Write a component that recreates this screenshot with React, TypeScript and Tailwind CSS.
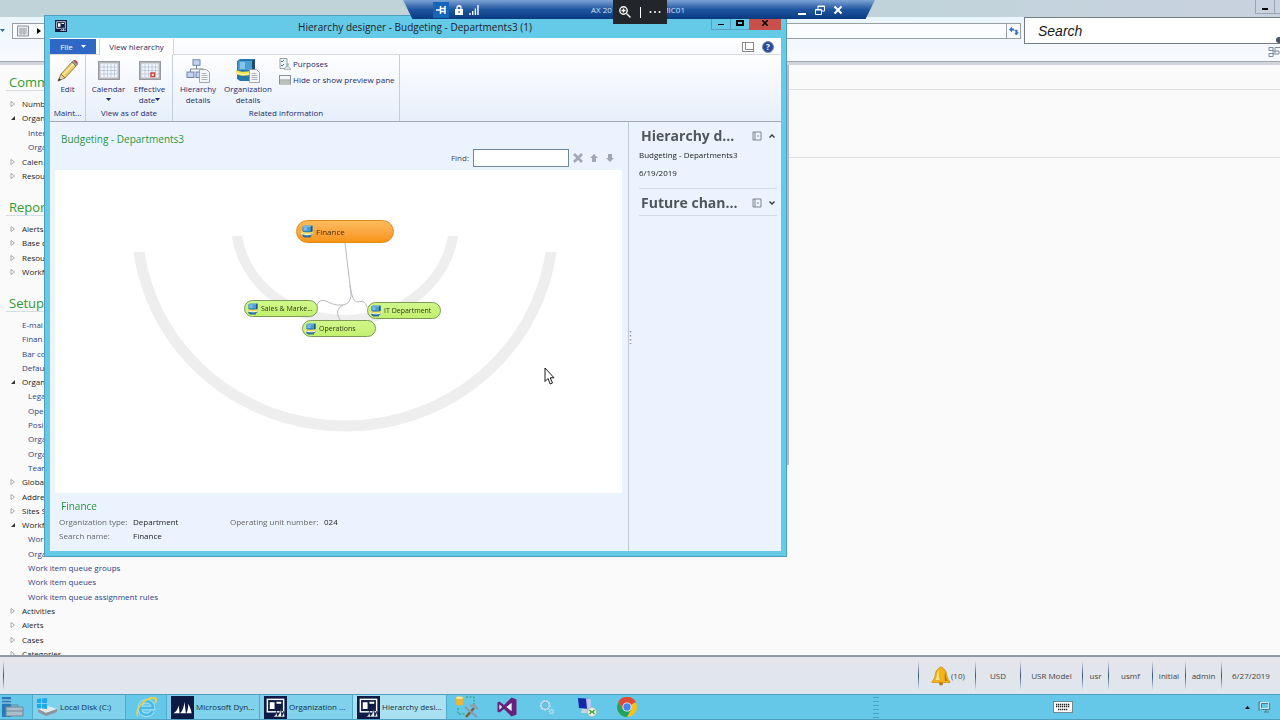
import React from 'react';

interface NavItem {
  label: string;
  kind: 'closed' | 'open' | 'link' | 'child';
}

interface NavSection {
  title: string;
  listClass: string;
  items: NavItem[];
}

const navSections: NavSection[] = [
  {
    title: 'Comm',
    listClass: 'h-[86px]',
    items: [
      { label: 'Numb', kind: 'closed' },
      { label: 'Organ', kind: 'open' },
      { label: 'Inter', kind: 'child' },
      { label: 'Orga', kind: 'child' },
      { label: 'Calen', kind: 'closed' },
      { label: 'Resou', kind: 'closed' },
    ],
  },
  {
    title: 'Repor',
    listClass: 'h-[57px]',
    items: [
      { label: 'Alerts', kind: 'closed' },
      { label: 'Base d', kind: 'closed' },
      { label: 'Resou', kind: 'closed' },
      { label: 'Workf', kind: 'closed' },
    ],
  },
  {
    title: 'Setup',
    listClass: 'h-[343px]',
    items: [
      { label: 'E-mai', kind: 'link' },
      { label: 'Finan', kind: 'link' },
      { label: 'Bar co', kind: 'link' },
      { label: 'Defau', kind: 'link' },
      { label: 'Organ', kind: 'open' },
      { label: 'Lega', kind: 'child' },
      { label: 'Ope', kind: 'child' },
      { label: 'Posi', kind: 'child' },
      { label: 'Orga', kind: 'child' },
      { label: 'Orga', kind: 'child' },
      { label: 'Tean', kind: 'child' },
      { label: 'Globa', kind: 'closed' },
      { label: 'Addre', kind: 'closed' },
      { label: 'Sites S', kind: 'closed' },
      { label: 'Workf', kind: 'open' },
      { label: 'Wor', kind: 'child' },
      { label: 'Orga', kind: 'child' },
      { label: 'Work item queue groups', kind: 'child' },
      { label: 'Work item queues', kind: 'child' },
      { label: 'Work item queue assignment rules', kind: 'child' },
      { label: 'Activities', kind: 'closed' },
      { label: 'Alerts', kind: 'closed' },
      { label: 'Cases', kind: 'closed' },
      { label: 'Categories', kind: 'closed' },
    ],
  },
];

const statusCells = [
  { label: 'USD', width: 'w-[45px]' },
  { label: 'USR Model', width: 'w-[62px]' },
  { label: 'usr', width: 'w-[26px]' },
  { label: 'usmf', width: 'w-[44px]' },
  { label: 'initial', width: 'w-[33px]' },
  { label: 'admin', width: 'w-[36px]' },
  { label: '6/27/2019', width: 'w-[59px]' },
];

/* ---------- icons ---------- */

function OrgIcon({ className }: { className: string }) {
  return (
    <svg viewBox="0 0 24 24" className={className} aria-hidden="true">
      <path d="M3 3l3-2h15v17l-3 2H3z" fill="#2f7fb8" />
      <path d="M3 3h15v8H3z" fill="#4a9bd0" />
      <path d="M6 1h15l-3 2H3z" fill="#8cc6e6" />
      <path d="M5 4h6v6H5z" fill="#7cbbe2" />
      <path d="M18 3l3-2v17l-3 2z" fill="#1f567f" />
      <path d="M0 11c6 3 14 3 22 1v3c-8 3-16 2-22-1z" fill="#f3dc52" />
      <path d="M0 14c6 3 14 3 22 1v2c-8 3-16 2-22-1z" fill="#f8f6dc" />
      <path d="M3 18c4 2 9 2 15 1v4H7l-4-2z" fill="#2a6d9e" />
    </svg>
  );
}

function PageIcon({ x, y }: { x: number; y: number }) {
  return (
    <g transform={`translate(${x} ${y})`}>
      <path d="M0 0h7l3 3v10H0z" fill="#f5f6f8" stroke="#8a929c" strokeWidth=".8" />
      <path d="M2 4h5M2 6h6M2 8h6M2 10h6" stroke="#9aa2ac" strokeWidth=".8" />
    </g>
  );
}

function PencilIcon() {
  return (
    <svg viewBox="0 0 24 24" className="h-6 w-6" aria-hidden="true">
      <path d="M2 22l3-7 4 4z" fill="#e8cfa0" stroke="#5d5138" strokeWidth=".7" />
      <path d="M2 22l1-3 2 2z" fill="#333" />
      <path d="M5 15L16 3l4 4L9 19z" fill="#f0cc66" stroke="#80672b" strokeWidth=".8" />
      <path d="M7 16L18 4.500" stroke="#fff0b0" strokeWidth="1.200" />
      <path d="M16 3l1.500-1.500 4 4L20 7z" fill="#8fa5a8" stroke="#566" strokeWidth=".6" />
      <path d="M17.500 1.500C19-.5 23 3 21.500 5.500z" fill="#c9453b" />
    </svg>
  );
}

function CalendarIcon({ marked }: { marked?: boolean }) {
  return (
    <svg viewBox="0 0 24 24" className="h-6 w-6" aria-hidden="true">
      <rect x="1.500" y="2.500" width="21" height="18" fill="#b4b8bc" stroke="#96999d" />
      <rect x="3.500" y="4.500" width="17" height="14" fill="#f2f6fb" />
      <path d="M4 8h16M4 11.500h16M4 15h16M7 5v13M10.500 5v13M14 5v13M17.500 5v13" stroke="#b4c4dc" strokeWidth=".8" />
      {marked && <rect x="13" y="14" width="3.500" height="3.500" fill="#fff" stroke="#d8403c" strokeWidth="1.500" />}
    </svg>
  );
}

function HierarchyIcon() {
  return (
    <svg viewBox="0 0 24 24" className="h-6 w-6" aria-hidden="true">
      <path d="M10.500 6v4M4.500 14v-4h13v4" fill="none" stroke="#7d8794" />
      <rect x="7" y=".8" width="7" height="5.500" fill="#c3d3ef" stroke="#6f84ad" />
      <rect x="1" y="13" width="7" height="5.500" fill="#c3d3ef" stroke="#6f84ad" />
      <rect x="10" y="13" width="7" height="5.500" fill="#c3d3ef" stroke="#6f84ad" />
      <PageIcon x={13.5} y={10.5} />
    </svg>
  );
}

function OrgDetailsIcon() {
  return (
    <svg viewBox="0 0 24 24" className="h-6 w-6" aria-hidden="true">
      <path d="M1 2l3-2h15v19l-3 3H4l-3-2z" fill="#2777a8" />
      <path d="M2 2h14v9H2z" fill="#4aa0d2" />
      <path d="M4 3h5v7H4z" fill="#86c5e8" />
      <path d="M16 2l3-2v19l-3 3z" fill="#1c4d70" />
      <path d="M0 11c6 3 13 2 20-1v4c-7 3-14 4-20 1z" fill="#f4de45" />
      <path d="M0 13c6 3 13 2 20-1v1c-7 3-14 4-20 1z" fill="#fbf8d0" />
      <PageIcon x={13.5} y={10.5} />
    </svg>
  );
}

function PurposesIcon() {
  return (
    <svg viewBox="0 0 12 12" className="h-3 w-3" aria-hidden="true">
      <path d="M1 .5h7v10H1z" fill="#eef4f6" stroke="#7f8c96" strokeWidth=".8" />
      <path d="M2 3l1 1 2-2M2 7l1 1 2-2" fill="none" stroke="#3c7f9a" />
      <circle cx="8.500" cy="6.500" r="1.500" fill="#aab3bd" />
      <path d="M5.500 11.500c0-4 6-4 6 0z" fill="#dfe5ea" stroke="#8a939c" strokeWidth=".6" />
    </svg>
  );
}

function PaneIcon() {
  return (
    <svg viewBox="0 0 12 12" className="h-3 w-3" aria-hidden="true">
      <rect x=".5" y="1.500" width="11" height="8.500" fill="#f4f5f6" stroke="#8c9094" />
      <path d="M1 6.500h10v3H1z" fill="#b9c3ba" />
      <path d="M1 6h10" stroke="#8c9094" />
    </svg>
  );
}

function AxAppIcon({ className }: { className: string }) {
  return (
    <svg viewBox="0 0 24 24" className={className} aria-hidden="true">
      <rect width="24" height="24" fill="#0d1b44" />
      <rect x="3.500" y="3.500" width="17" height="13" fill="none" stroke="#fff" strokeWidth="1.500" />
      <path d="M6 6.500h5v7H6zM13 6h5v2h-5z" fill="#fff" />
      <path d="M9.500 22c2-1 3-3 3.500-6l1 5c2-2 3-5 3.500-9l1 9c1-1 1.500-3 2-5l1.500 6z" fill="#fff" stroke="#0d1b44" strokeWidth=".8" />
    </svg>
  );
}

function DynamicsIcon() {
  return (
    <svg viewBox="0 0 24 24" className="h-[23px] w-[23px]" aria-hidden="true">
      <rect width="24" height="24" fill="#0d1b44" />
      <path d="M2.500 18c3-1.500 4.500-4 5.500-8l1 8zM9.500 18c3-3 4-7 4.500-12l1.500 12zM16 18c1.500-3 2-6 2-10 1.500 3 3 6 3.500 10z" fill="#fff" />
    </svg>
  );
}

function ExpandArrow({ kind }: { kind: NavItem['kind'] }) {
  if (kind === 'closed') {
    return (
      <svg viewBox="0 0 6 6" className="h-1.5 w-1.5" aria-hidden="true">
        <path d="M1 .5v5L4.500 3z" fill="#fff" stroke="#999" strokeWidth=".8" />
      </svg>
    );
  }
  if (kind === 'open') {
    return (
      <svg viewBox="0 0 6 6" className="h-1.5 w-1.5" aria-hidden="true">
        <path d="M5 1v4H1z" fill="#333" />
      </svg>
    );
  }
  return null;
}

function CaretDown() {
  return (
    <svg viewBox="0 0 5 3" className="h-[3px] w-[5px]" aria-hidden="true">
      <path d="M0 0h5L2.500 3z" fill="currentColor" />
    </svg>
  );
}

/* ---------- main application window ---------- */

function AddressBar() {
  return (
    <header>
      <div className="flex h-[17px] justify-end bg-linear-to-r from-[#bfd3d9] from-65% to-[#c9d2e0]">
        <button aria-label="Minimize" className="flex h-3.5 w-5 items-center justify-center border border-t-0 border-[#9aa5b4]">
          <span className="mt-1 h-0.5 w-1.5 bg-black" />
        </button>
        <button aria-label="Maximize" className="h-3.5 w-[5px] border-b border-[#9aa5b4]" />
      </div>
      <div className="flex h-11 items-start bg-linear-to-b from-[#eaf6fc] to-[#f9faff]">
        <span className="mt-3 w-3 text-[#2a6fa0]"><CaretDown /></span>
        <div className="mt-1.5 flex h-4 flex-1 items-center justify-between border border-[#9c9ea6] bg-[#fafcff]">
          <span className="flex items-center gap-2 pl-1">
            <svg viewBox="0 0 12 12" className="h-3 w-3" aria-hidden="true">
              <path d="M.5 1h11v10H.5z" fill="#e6e8ec" stroke="#8d929b" />
              <path d="M2 4h8M2 6h8M2 8h8M4 3v7M7 3v7" stroke="#a3a8b2" />
            </svg>
            <svg viewBox="0 0 4 6" className="h-1.5 w-1" aria-hidden="true">
              <path d="M0 0v6l4-3z" />
            </svg>
          </span>
          <button aria-label="Refresh" className="flex h-full w-3.5 items-center justify-center border-l border-[#9c9ea6]">
            <svg viewBox="0 0 10 10" className="h-2.5 w-2.5" fill="#2f72bd" aria-hidden="true">
              <path d="M0 3.500L3 .5V2.500h2v2H3v2zM10 6.500l-3 3-1.500-2.500H6.500V5H5.500V3.800h3V6.500z" />
            </svg>
          </button>
        </div>
        <div className="ml-[3px] w-[256px]">
          <div className="flex h-[27px] items-center border border-r-0 border-[#777b86] bg-white">
            <input
              type="text"
              aria-label="Search"
              placeholder="Search"
              className="w-full bg-transparent pl-[13px] font-['Liberation_Sans',sans-serif] text-sm italic outline-none placeholder:text-[#1a1a1a]"
            />
            <span className="h-1.5 w-1 self-end rounded-l bg-[#4b5563]" />
          </div>
          <div className="flex h-4 items-center justify-end">
            <svg viewBox="0 0 12 12" className="h-3 w-3" fill="none" stroke="#7f8a9c" aria-hidden="true">
              <path d="M1 1.500h4v3H1zM1 7.500h4v3H1zM7 1.500h5M7 1.500v6M5 5h6v3H5z" />
            </svg>
          </div>
        </div>
      </div>
      <div className="h-1 border-t border-[#a2a5b3] bg-[#d3d5dc]" />
    </header>
  );
}

function NavPane() {
  return (
    <nav className="flex w-[787px] shrink-0 flex-col gap-2.5 pl-1.5 pt-[3px]">
      {navSections.map((section) => (
        <section key={section.title}>
          <h2 className="h-[23px] w-[200px] border-b border-[#d5dde2] pl-[3px] text-[13px] leading-[28px] text-[#2f9a33]">{section.title}</h2>
          <ul className={`mt-1.5 flex flex-col justify-between ${section.listClass}`}>
            {section.items.map((item, i) => (
              <li key={i} className="flex h-3.5 items-center">
                <span className={item.kind === 'child' ? 'w-[22px]' : 'w-4 pl-1'}>
                  <ExpandArrow kind={item.kind} />
                </span>
                <a
                  href="#"
                  className={item.kind === 'child' || item.kind === 'link' ? 'whitespace-nowrap text-[#2b4388]' : 'whitespace-nowrap text-[#222]'}
                >
                  {item.label}
                </a>
              </li>
            ))}
          </ul>
        </section>
      ))}
    </nav>
  );
}

function StatusBar() {
  return (
    <footer className="flex h-[39px] shrink-0 items-stretch justify-between border-t-2 border-[#8e9aa6] bg-linear-to-b from-[#e4e5eb] to-[#dfe6ee] text-[#444]">
      <span className="my-1 ml-[3px] w-px bg-linear-to-b from-transparent via-[#37557f] to-transparent" />
      <div className="flex">
        <div className="flex w-[57px]">
          <span className="my-1 w-px bg-linear-to-b from-transparent via-[#37557f] to-transparent" />
          <span className="flex flex-1 items-center pl-3">
            <svg viewBox="0 0 20 20" className="h-5 w-5" aria-hidden="true">
              <circle cx="10" cy="17.500" r="2" fill="#b8790f" />
              <path d="M10 1c2 0 2 1.500 2 1.500 4 1.500 3.500 7 4.500 9.500.8 2 2.500 2.500 2.500 4.500H1c0-2 1.700-2.500 2.500-4.500C4.500 9.500 4 4 8 2.500 8 2.500 8 1 10 1z" fill="#f2b21c" stroke="#c98a10" strokeWidth=".7" />
              <path d="M8 4c-2.500 2-1.500 7-3.500 10h4C7 10 7.500 6 8 4z" fill="#ffea8a" />
              <path d="M14 5c1 3 .5 7 3 10h-3c-1-3 0-7 0-10z" fill="#c07d14" />
            </svg>
            (10)
          </span>
        </div>
        {statusCells.map((cell) => (
          <div key={cell.label} className={`flex ${cell.width}`}>
            <span className="my-1 w-px bg-linear-to-b from-transparent via-[#37557f] to-transparent" />
            <span className="flex flex-1 items-center justify-center whitespace-nowrap">{cell.label}</span>
          </div>
        ))}
      </div>
    </footer>
  );
}

function TaskBar() {
  return (
    <footer className="flex h-[26px] shrink-0 items-stretch border-y border-[#4f9fc0] bg-[#65c8e8] text-[#12303f]">
      <button aria-label="Server Manager" className="flex w-[33px] items-center border-r border-[#4fa9c9]">
        <svg viewBox="0 0 24 22" className="h-[22px] w-6" aria-hidden="true">
          <path d="M2 1h9v20H2z" fill="#2779b8" />
          <path d="M2 4h9M2 7h9" stroke="#bfe0f2" />
          <path d="M6 11h17v9H6z" fill="#a9bdcb" stroke="#6f8798" />
          <path d="M11 11V9h7v2M6 15h17" fill="none" stroke="#6f8798" />
        </svg>
      </button>
      <button className="flex w-[93px] items-center gap-0.5 border-r border-[#4fa9c9] bg-[#7fd1ec] pl-[3px]">
        <svg viewBox="0 0 22 20" className="h-5 w-[22px]" aria-hidden="true">
          <path d="M2 12l10-3 9 3-11 4z" fill="#e6e9eb" />
          <path d="M2 12l8 4v3l-8-4zM10 16l11-4v3l-11 4z" fill="#8b959b" />
          <path d="M1 2l4-.5V6H1zM6 1.500l5-.5v5H6zM1 7h4v4.500L1 11zM6 7h5v5l-5-.5z" fill="#1fa8f2" />
        </svg>
        Local Disk (C:)
      </button>
      <button aria-label="Internet Explorer" className="flex w-[41px] items-center justify-center border-r border-[#4fa9c9]">
        <svg viewBox="0 0 22 22" className="h-[22px] w-[22px]" fill="none" aria-hidden="true">
          <path d="M5 12h13c0-9-13-9-13 0s10 8 12.500 3" stroke="#a5e4fa" strokeWidth="4.500" />
          <path d="M5 12h13c0-9-13-9-13 0s10 8 12.500 3" stroke="#45b8e8" strokeWidth="2.600" />
          <path d="M3 20C-1 15 9 1 20 2c2 1 1 3 0 5" stroke="#f2cf3e" strokeWidth="1.800" />
        </svg>
      </button>
      <button className="flex w-[93px] items-center gap-0.5 border-r border-[#4fa9c9] bg-[#7fd1ec] pl-1">
        <DynamicsIcon />
        Microsoft Dyn...
      </button>
      <button className="flex w-[93px] items-center gap-0.5 border-r border-[#4fa9c9] bg-[#7fd1ec] pl-1">
        <AxAppIcon className="h-[23px] w-[23px]" />
        Organization ...
      </button>
      <button className="flex w-[94px] items-center gap-0.5 border-r border-[#4fa9c9] bg-[#a9e0f2] pl-1">
        <AxAppIcon className="h-[23px] w-[23px]" />
        Hierarchy desi...
      </button>
      <div className="flex items-center">
        <button aria-label="Configuration tools" className="flex w-10 justify-center">
          <svg viewBox="0 0 24 24" className="h-6 w-6" fill="none" aria-hidden="true">
            <path d="M11 2h8v8M3 13v6h8" stroke="#2c9a4d" strokeDasharray="2 1.500" />
            <path d="M1 3c0-2 7-2 7 0v6c0 2-7 2-7 0z" fill="#eab53a" />
            <ellipse cx="4.500" cy="2.800" rx="3.500" ry="1.300" fill="#fbe59a" />
            <path d="M11 22l8-9" stroke="#8a5a2b" strokeWidth="2.500" />
            <path d="M15 11l4-1 4 4M10 12l12 10" stroke="#8f9ba4" strokeWidth="2.200" />
          </svg>
        </button>
        <button aria-label="Visual Studio" className="flex w-10 justify-center">
          <svg viewBox="0 0 20 20" className="h-5 w-5" aria-hidden="true">
            <path fillRule="evenodd" d="M14.500.5l5 2v15l-5 2L7 12l-4.500 3.500L.5 14.500v-9l2-1L7 8zM14.500 6l-5 4 5 4zM2.500 7.500v5L5 10z" fill="#68217a" />
            <path d="M14.500 6l-5 4 5 4zM2.500 7.500v5L5 10z" fill="#e6f4fa" />
          </svg>
        </button>
        <button aria-label="Services" className="flex w-10 justify-center">
          <svg viewBox="0 0 18 18" className="h-4 w-4" fill="none" stroke="#c3e0f2" aria-hidden="true">
            <circle cx="7" cy="7" r="4.500" strokeWidth="3" strokeDasharray="2.400 .6" />
            <circle cx="7" cy="7" r="3.200" stroke="#5f9fd0" strokeWidth=".8" />
            <circle cx="14" cy="14" r="2.200" strokeWidth="2" strokeDasharray="1.200 .6" />
          </svg>
        </button>
        <button aria-label="Remote Desktop" className="flex w-10 justify-center">
          <svg viewBox="0 0 20 20" className="h-5 w-5" aria-hidden="true">
            <path d="M1 1l13 1v10L2 11z" fill="#1226a8" />
            <path d="M9 1.600l5 .4v10l-4-.3z" fill="#b8c8ee" />
            <path d="M5 12h5v3l3 1H4z" fill="#c9d3da" />
            <circle cx="15" cy="15" r="4.500" fill="#e9f2e6" stroke="#a3b8a0" strokeWidth=".6" />
            <path d="M12.500 13l2 2-2 2M17.500 13l-2 2 2 2" fill="none" stroke="#3b9b34" strokeWidth="1.300" />
          </svg>
        </button>
        <button aria-label="Chrome" className="flex w-10 justify-center">
          <svg viewBox="0 0 20 20" className="h-5 w-5" aria-hidden="true">
            <circle cx="10" cy="10" r="10" fill="#fbc116" />
            <path d="M10 10L1.340 5A10 10 0 0 1 18.660 5z" fill="#dd4b39" />
            <path d="M10 5.500h9A10 10 0 0 0 1.340 5L6 12z" fill="#dd4b39" />
            <path d="M1.340 5A10 10 0 0 0 10 20l4-7.500L6 12.500z" fill="#1da462" />
            <circle cx="10" cy="10" r="4.500" fill="#fff" />
            <circle cx="10" cy="10" r="3.700" fill="#4285f4" />
          </svg>
        </button>
      </div>
      <div className="flex flex-1 items-center justify-between pl-[226px] pr-[172px]">
        <svg viewBox="0 0 6 22" className="h-[22px] w-1.5" aria-hidden="true">
          <path d="M1 1v21M3 1v21M5 1v21" stroke="#2e7f9f" strokeDasharray="1 3" />
        </svg>
        <svg viewBox="0 0 20 12" className="h-3 w-5" aria-hidden="true">
          <rect x=".5" y=".5" width="19" height="11" fill="#fff" stroke="#6f8791" />
          <path d="M3 3.500h14M3 5.500h14M5 8.500h10" stroke="#222" strokeWidth="1.400" strokeDasharray="1.300 .7" />
        </svg>
      </div>
      <div className="flex items-center gap-2 pr-2.5">
        <svg viewBox="0 0 5 3" className="h-[3px] w-[5px]" aria-hidden="true">
          <path d="M0 3h5L2.500 0z" />
        </svg>
        <svg viewBox="0 0 12 12" className="h-3 w-3" fill="none" aria-hidden="true">
          <path d="M3.500 2.500h8v6h-8zM1 1v9M1 1h2M6 11h5M8 8v3" stroke="#4d7b8f" />
          <path d="M2.500 1.500h8v6h-8z" stroke="#e8f5fa" strokeWidth=".8" />
        </svg>
      </div>
    </footer>
  );
}

/* ---------- hierarchy designer window ---------- */

function RibbonGroup({ title, width, children }: { title: string; width: string; children: React.ReactNode }) {
  return (
    <div className={`flex flex-col border-r border-[#c6cedd] ${width}`}>
      <div className="flex h-[52px] items-start justify-center">{children}</div>
      <div className="text-center">{title}</div>
    </div>
  );
}

function RibbonButton({ icon, lines, width, caret }: { icon: React.ReactNode; lines: string[]; width: string; caret?: 'below' | 'inline' }) {
  return (
    <button className={`flex flex-col items-center pt-1 leading-[11px] ${width}`}>
      {icon}
      <span className="flex flex-col items-center">
        {lines.map((line, i) => (
          <span key={line} className="flex items-center whitespace-nowrap">
            {line}
            {caret === 'inline' && i === lines.length - 1 && <CaretDown />}
          </span>
        ))}
      </span>
      {caret === 'below' && <span className="mt-1"><CaretDown /></span>}
    </button>
  );
}

function Ribbon() {
  return (
    <div className="text-[#1e2a6b]">
      <div className="flex h-[17px] items-stretch gap-[3px] border-b border-[#d9dade] bg-linear-to-b from-white to-[#f8fafd] pt-px">
        <button className="flex w-[46px] items-center justify-center gap-2 bg-[#2f68c4] text-white">
          File
          <CaretDown />
        </button>
        <button className="-mb-px w-[75px] border-x border-[#d0d4dc] bg-white">View hierarchy</button>
        <div className="flex flex-1 items-center justify-end gap-2 pr-[7px]">
          <button aria-label="Layout">
            <svg viewBox="0 0 12 12" className="h-3 w-3" aria-hidden="true">
              <rect x=".5" y="1.500" width="11" height="9" fill="#fff" stroke="#888" />
              <path d="M3.500 2v6.500H11" fill="none" stroke="#888" />
            </svg>
          </button>
          <button aria-label="Help" className="flex h-3 w-3 items-center justify-center rounded-full border border-[#7d8ba8] bg-[#264a9c] font-bold leading-none text-white">
            ?
          </button>
        </div>
      </div>
      <div className="flex h-[67px] border-b border-[#a4a9b5] bg-linear-to-b from-[#fefefe] to-[#e6effb]">
        <RibbonGroup title="Maint..." width="w-9">
          <RibbonButton icon={<PencilIcon />} lines={['Edit']} width="w-9" />
        </RibbonGroup>
        <RibbonGroup title="View as of date" width="w-[87px]">
          <RibbonButton icon={<CalendarIcon />} lines={['Calendar']} width="w-[41px]" caret="below" />
          <RibbonButton icon={<CalendarIcon marked />} lines={['Effective', 'date']} width="w-[41px]" caret="inline" />
        </RibbonGroup>
        <RibbonGroup title="Related information" width="w-[227px]">
          <RibbonButton icon={<HierarchyIcon />} lines={['Hierarchy', 'details']} width="w-[50px]" />
          <RibbonButton icon={<OrgDetailsIcon />} lines={['Organization', 'details']} width="w-[50px]" />
          <div className="flex flex-1 flex-col gap-1 pl-1.5 pt-[3px]">
            <button className="flex h-3 items-center gap-0.5 whitespace-nowrap"><PurposesIcon />Purposes</button>
            <button className="flex h-3 items-center gap-0.5 whitespace-nowrap"><PaneIcon />Hide or show preview pane</button>
          </div>
        </RibbonGroup>
      </div>
    </div>
  );
}

function DiagramNode({ label, place }: { label: string; place: string }) {
  return (
    <button className={`absolute flex h-[17px] w-[74px] items-center gap-0.5 whitespace-nowrap rounded-full border border-[#7c9a55] bg-linear-to-b from-[#d0f88a] to-[#c3f06e] pl-0.5 text-[7px] text-[#2b3a1a] ${place}`}>
      <OrgIcon className="h-3 w-3 shrink-0" />
      {label}
    </button>
  );
}

function Diagram() {
  return (
    <div className="relative h-[323px] overflow-hidden bg-white">
      <svg viewBox="0 0 567 323" className="h-[323px] w-[567px]" fill="none" aria-hidden="true">
        <clipPath id="outer-ring">
          <rect x="0" y="82" width="567" height="241" />
        </clipPath>
        <clipPath id="inner-ring">
          <rect x="0" y="66" width="567" height="257" />
        </clipPath>
        <ellipse cx="290" cy="54" rx="208" ry="202" stroke="#eeeeee" strokeWidth="11" clipPath="url(#outer-ring)" />
        <ellipse cx="290" cy="53" rx="109" ry="97" stroke="#eeeeee" strokeWidth="10" clipPath="url(#inner-ring)" />
        <g stroke="#b9b9c0">
          <path d="M290 73L296 124C296 132 292 135 286 135C276 136 270 128 265 131C263 132 263 134 262 135" />
          <path d="M288 135C282 138 281 143 285 150" />
          <path d="M295 115C297 128 299 132 303 132C308 131 309 130 312 137" />
        </g>
      </svg>
      <button className="absolute left-[241px] top-[50px] flex h-[23px] w-[98px] items-center gap-0.5 rounded-full border border-[#e08a1c] bg-linear-to-b from-[#fdbb5e] to-[#f8940f] pl-1 text-[#4a2c08]">
        <OrgIcon className="h-[13px] w-[13px]" />
        Finance
      </button>
      <DiagramNode label="Sales & Marke..." place="left-[189px] top-[130px]" />
      <DiagramNode label="IT Department" place="left-[312px] top-[132px]" />
      <DiagramNode label="Operations" place="left-[247px] top-[150px]" />
    </div>
  );
}

function FactBox({ title, open, children }: { title: string; open?: boolean; children?: React.ReactNode }) {
  return (
    <section className="border-b border-[#cfdbe6]">
      <div className="flex h-6 items-center pl-0.5">
        <h3 className="flex-1 whitespace-nowrap text-[14px] font-bold text-[#50565c]">{title}</h3>
        <svg viewBox="0 0 10 10" className="h-2.5 w-2.5" fill="none" stroke="#7d858d" aria-hidden="true">
          <path d="M1 1h8v8H1zM3 1v8M5 5h2" />
        </svg>
        <button aria-label={open ? 'Collapse' : 'Expand'} className="ml-[7px] mr-0.5">
          <svg viewBox="0 0 6 6" className="h-1.5 w-1.5" fill="none" stroke="#333b45" strokeWidth="1.400" aria-hidden="true">
            <path d={open ? 'M.5 4.500L3 2l2.500 2.500' : 'M.5 1.500L3 4l2.500-2.500'} />
          </svg>
        </button>
      </div>
      {children}
    </section>
  );
}

function DesignerWindow() {
  return (
    <div className="absolute left-11 top-[15px] w-[743px] border border-[#4d9fbd] bg-[#65c9e8] px-[5px] pb-[5px] text-[#222]">
      <div className="flex h-[22px] items-start">
        <AxAppIcon className="ml-[5px] mt-1 h-3 w-3" />
        <h1 className="flex-1 pl-[52px] text-center text-[10px] leading-[22px]">Hierarchy designer - Budgeting - Departments3 (1)</h1>
        <div className="flex h-3.5 w-[70px] text-black">
          <button aria-label="Minimize window" className="flex w-5 items-center justify-center border border-t-0 border-[#51a3bf]">
            <span className="mt-1 h-px w-1.5 bg-black" />
          </button>
          <button aria-label="Maximize window" className="flex w-[18px] items-center justify-center border-b border-[#51a3bf]">
            <span className="h-1.5 w-2 border-2 border-black" />
          </button>
          <button aria-label="Close window" className="flex flex-1 items-center justify-center bg-[#c9504a]">
            <svg viewBox="0 0 6 6" className="h-1.5 w-1.5" stroke="black" strokeWidth="1.500" aria-hidden="true">
              <path d="M0 0l6 6M6 0L0 6" />
            </svg>
          </button>
        </div>
      </div>
      <Ribbon />
      <div className="flex bg-[#ebf4fe]">
        <div className="flex-1 pb-2 pl-[5px] pr-1.5">
          <h2 className="pl-1.5 pt-[10px] text-[10px] leading-[14px] text-[#2a9440]">Budgeting - Departments3</h2>
          <div className="my-[3px] flex items-center justify-end gap-1 pr-[7px] text-[#444]">
            <label htmlFor="find">Find:</label>
            <input
              id="find"
              type="text"
              autoFocus
              className="h-[18px] w-24 border border-[#6d87a3] bg-white px-1 outline-none"
            />
            <span className="flex gap-1.5 text-[#a0a7b8]">
              <button aria-label="Clear">
                <svg viewBox="0 0 10 10" className="h-2.5 w-2.5" stroke="currentColor" strokeWidth="2.600" aria-hidden="true">
                  <path d="M1 1l8 8M9 1L1 9" />
                </svg>
              </button>
              <button aria-label="Previous">
                <svg viewBox="0 0 10 10" className="h-2.5 w-2.5" fill="currentColor" aria-hidden="true">
                  <path d="M5 1l4 4H7v4H3V5H1z" />
                </svg>
              </button>
              <button aria-label="Next">
                <svg viewBox="0 0 10 10" className="h-2.5 w-2.5" fill="currentColor" aria-hidden="true">
                  <path d="M5 9l4-4H7V1H3v4H1z" />
                </svg>
              </button>
            </span>
          </div>
          <Diagram />
          <div className="pl-1">
            <h3 className="pl-0.5 pt-1.5 text-[10px] leading-[15px] text-[#2a9440]">Finance</h3>
            <dl className="mt-px grid grid-cols-[74px_97px_94px_1fr] leading-[14px]">
              <dt className="text-[#666]">Organization type:</dt>
              <dd>Department</dd>
              <dt className="text-[#666]">Operating unit number:</dt>
              <dd>024</dd>
              <dt className="text-[#666]">Search name:</dt>
              <dd>Finance</dd>
            </dl>
          </div>
        </div>
        <div className="flex w-[153px] border-l border-[#bccbda]">
          <span className="flex w-2.5 items-center">
            <svg viewBox="0 0 3 14" className="h-3.5 w-[3px]" aria-hidden="true">
              <path d="M1.500 1v13" stroke="#8d99a6" strokeWidth="1.500" strokeDasharray="1.500 2.500" />
            </svg>
          </span>
          <div className="flex flex-1 flex-col gap-0.5 pr-1 pt-0.5">
            <FactBox title="Hierarchy d..." open>
              <p className="leading-[14px]">Budgeting - Departments3</p>
              <p className="pb-2 pt-1 leading-[14px]">6/19/2019</p>
            </FactBox>
            <FactBox title="Future chan..." />
          </div>
        </div>
      </div>
    </div>
  );
}

/* ---------- remote session bar ---------- */

function RemoteBar() {
  return (
    <div className="absolute left-[403px] top-0 flex h-[19px] w-[472px] items-center justify-between bg-linear-to-b from-[#7da3d4] via-[#1f559f] to-[#083a80] px-[30px] text-[#d5e2f2] [clip-path:polygon(0_0,100%_0,98%_100%,2%_100%)]">
      <div className="flex items-center gap-1.5 text-white">
        <button aria-label="Pin" className="flex h-4 w-4 items-center justify-center bg-[#1565b8]">
          <svg viewBox="0 0 10 10" className="h-2.5 w-2.5" fill="none" stroke="currentColor" strokeWidth="1.500" aria-hidden="true">
            <path d="M0 5h4M4.500 1v8M9 1v8M5 3.500h4M5 6.500h4" />
          </svg>
        </button>
        <svg viewBox="0 0 8 10" className="h-2.5 w-2" aria-hidden="true">
          <path d="M2 4V3c0-3 4-3 4 0v1" fill="none" stroke="currentColor" strokeWidth="1.300" />
          <path d="M0 4h8v6H0z" fill="currentColor" />
          <path d="M3.500 6h1v2h-1z" fill="#1d4c90" />
        </svg>
        <svg viewBox="0 0 10 10" className="h-2.5 w-2.5" stroke="currentColor" strokeWidth="1.400" aria-hidden="true">
          <path d="M1 10V8M3.700 10V6M6.400 10V3.500M9 10V0" />
        </svg>
      </div>
      <div className="flex w-[94px] justify-between">
        <span>AX 20</span>
        <span>MIC01</span>
      </div>
      <div className="flex items-center gap-2 pr-0.5 text-white">
        <button aria-label="Minimize session">
          <svg viewBox="0 0 10 10" className="h-2.5 w-2.5" stroke="currentColor" strokeWidth="1.800" aria-hidden="true">
            <path d="M1 9h8" />
          </svg>
        </button>
        <button aria-label="Restore session">
          <svg viewBox="0 0 10 10" className="h-2.5 w-2.5" fill="none" stroke="currentColor" aria-hidden="true">
            <path d="M.5 4.500h6v5h-6zM.5 5h6M3 4V1h6.500v5H7M3 1.500h6.500" />
          </svg>
        </button>
        <button aria-label="Close session">
          <svg viewBox="0 0 10 10" className="h-2.5 w-2.5" stroke="currentColor" strokeWidth="2" aria-hidden="true">
            <path d="M1.500 1.500l7 7M8.500 1.500l-7 7" />
          </svg>
        </button>
      </div>
    </div>
  );
}

function ZoomWidget() {
  return (
    <div className="absolute left-[613px] top-0 flex h-6 w-[54px] items-center justify-between bg-[#22252a] px-1.5 text-white">
      <button aria-label="Zoom in">
        <svg viewBox="0 0 12 12" className="h-3 w-3" fill="none" stroke="currentColor" strokeWidth="1.400" aria-hidden="true">
          <circle cx="4.500" cy="4.500" r="3.700" />
          <path d="M7.500 7.500l4 4M2.500 4.500h4M4.500 2.500v4" />
        </svg>
      </button>
      <span className="h-[11px] w-px bg-white" />
      <button aria-label="More">
        <svg viewBox="0 0 12 4" className="h-1 w-3" fill="currentColor" aria-hidden="true">
          <circle cx="1.500" cy="2" r="1" />
          <circle cx="6" cy="2" r="1" />
          <circle cx="10.500" cy="2" r="1" />
        </svg>
      </button>
    </div>
  );
}

export default function App() {
  return (
    <div className="relative flex h-screen flex-col overflow-hidden bg-[#fafafa] font-['Open_Sans','Noto_Sans',sans-serif] text-[8px] leading-[12px]">
      <AddressBar />
      <main className="flex min-h-0 flex-1 overflow-hidden">
        <NavPane />
        <div className="h-[400px] w-0.5 bg-[#b7bac4]" />
        <div className="flex flex-1 flex-col">
          <div className="h-[25px] border-b border-[#dedfe1]" />
          <div className="h-[68px] border-b border-[#dcdfdf]" />
        </div>
      </main>
      <StatusBar />
      <TaskBar />
      <DesignerWindow />
      <RemoteBar />
      <ZoomWidget />
      <svg viewBox="0 0 12 18" className="absolute left-[544px] top-[367px] h-[18px] w-3" aria-hidden="true">
        <path d="M1 1v13.500l3-3 2.200 5.500 2.300-1-2.300-5.200H10z" fill="#fff" stroke="#000" strokeWidth=".9" />
      </svg>
    </div>
  );
}
